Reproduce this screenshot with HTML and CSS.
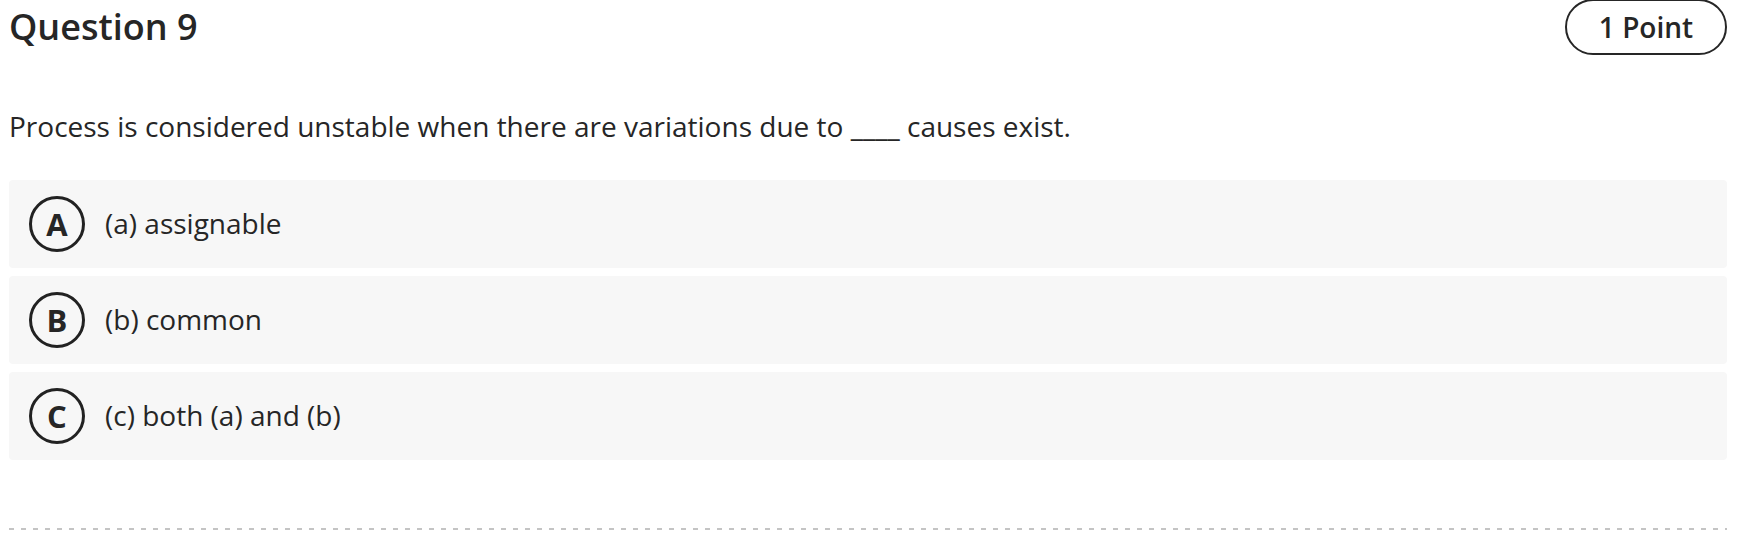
FILE: index.html
```html
<!DOCTYPE html>
<html lang="en">
<head>
<meta charset="utf-8">
<title>Question 9</title>
<link rel="stylesheet" href="styles.css">
</head>
<body>
<div class="question">
  <div class="q-header">
    <h2 class="q-title">Question 9</h2>
    <span class="q-points">1 Point</span>
  </div>
  <p class="q-text">Process is considered unstable when there are variations due to ____ causes exist.</p>
  <div class="options">
    <div class="option"><span class="letter">A</span><span class="opt-text">(a) assignable</span></div>
    <div class="option"><span class="letter">B</span><span class="opt-text">(b) common</span></div>
    <div class="option"><span class="letter">C</span><span class="opt-text">(c) both (a) and (b)</span></div>
  </div>
  <div class="divider"></div>
</div>
</body>
</html>
```

FILE: styles.css
```css
* { box-sizing: border-box; }
html, body { margin: 0; padding: 0; background: #fff; }
body {
  font-family: "Open Sans", "Noto Sans", sans-serif;
  color: #262626;
}
.question {
  padding: 0 20px 0 9px;
}
.q-header {
  display: flex;
  justify-content: space-between;
  align-items: flex-start;
  height: 56px;
}
.q-title {
  margin: 2px 0 0;
  font-size: 36px;
  font-weight: 600;
  line-height: 49px;
}
.q-points {
  display: flex;
  align-items: center;
  justify-content: center;
  width: 162px;
  height: 56px;
  margin-top: -1px;
  border: 2px solid #262626;
  border-radius: 28px;
  font-size: 28px;
  font-weight: 600;
}
.q-text {
  margin: 51px 0 0;
  font-size: 28px;
  line-height: 38px;
}
.options {
  display: flex;
  flex-direction: column;
  gap: 8px;
  margin-top: 35px;
}
.option {
  display: flex;
  align-items: center;
  height: 88px;
  padding-left: 20px;
  background: #f7f7f7;
  border-radius: 4px;
}
.letter {
  display: flex;
  align-items: center;
  justify-content: center;
  width: 56px;
  height: 56px;
  border: 3px solid #222;
  border-radius: 50%;
  font-size: 31px;
  font-weight: 700;
  flex-shrink: 0;
}
.opt-text {
  margin-left: 20px;
  font-size: 28px;
  line-height: 38px;
  padding-bottom: 3px;
}
.divider {
  margin-top: 68px;
  height: 2px;
  background: repeating-linear-gradient(to right, #c4c4c4 0 5px, transparent 5px 12px);
}
```
